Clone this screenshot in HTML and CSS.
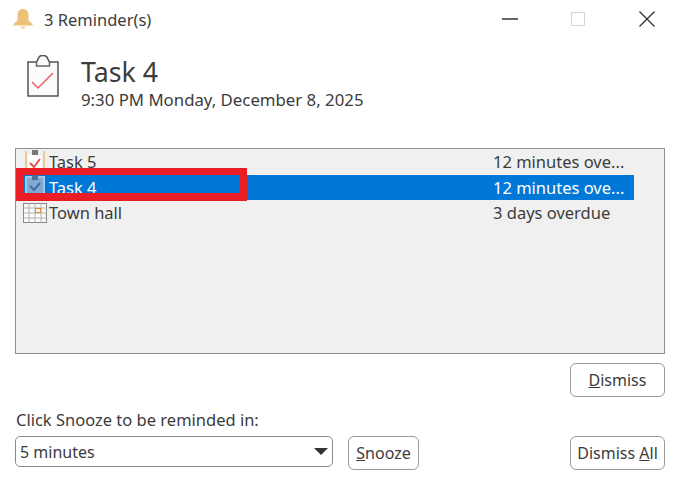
FILE: index.html
```html
<!DOCTYPE html>
<html>
<head>
  <link rel="stylesheet" href="styles.css">
</head>
<body>
  <div class="window">
    <div class="titlebar">
      <svg class="bell" width="20" height="20" viewBox="0 0 20 20">
        <path d="M10 0c-3.500 0-5.500 2.500-5.500 6v5.500L.5 15v1.500h19V15l-4-3.500V6C15.500 2.500 13.500 0 10 0z" fill="#eec07a"/>
        <path d="M7.500 17.500h5c0 1.500-1.200 2.500-2.500 2.500s-2.500-1-2.500-2.500z" fill="#f2d3a3"/>
      </svg>
      <span class="titlebar-text">3 Reminder(s)</span>
      <div class="controls">
        <svg class="control-min" width="16" height="2" viewBox="0 0 16 2"><path d="M0 1h16" stroke="#333" stroke-width="1.500"/></svg>
        <svg class="control-max" width="14" height="14" viewBox="0 0 14 14"><rect x=".5" y=".5" width="13" height="13" fill="none" stroke="#d4d4d4"/></svg>
        <svg class="control-close" width="16" height="16" viewBox="0 0 16 16"><path d="M.5.5l15 15M15.500.5l-15 15" stroke="#333" stroke-width="1.400"/></svg>
      </div>
    </div>

    <div class="header">
      <svg class="header-icon" width="32" height="42" viewBox="0 0 32 42">
        <path d="M1 7h8.500l1.500-2.500c.5-3 2.500-4 5-4s4.500 1 5 4L22.500 7H31v34H1z" fill="#fbfbfb" stroke="#555" stroke-width="1.500"/>
        <path d="M9.500 7v4h13V7" fill="none" stroke="#666" stroke-width="1.500"/>
        <path d="M5 27l6 6L26 18" fill="none" stroke="#e4636b" stroke-width="1.500"/>
      </svg>
      <div>
        <div class="header-title">Task 4</div>
        <div class="header-date">9:30 PM Monday, December 8, 2025</div>
      </div>
    </div>

    <div class="list">
      <div class="row">
        <svg class="row-icon row-icon-clip" width="20" height="24" viewBox="0 0 20 24">
          <path d="M1 1v21M19 1v21" stroke="#efc98d" stroke-width="2"/>
          <rect x="7" y="0" width="6" height="5" fill="#777"/>
          <rect x="3" y="5" width="14" height="17" fill="#fdfdfd"/>
          <path d="M5 13l4 4 6-8" fill="none" stroke="#d9534a" stroke-width="2"/>
        </svg>
        <span class="row-name">Task 5</span>
        <span class="row-due">12 minutes ove...</span>
      </div>
      <div class="row row-selected">
        <svg class="row-icon row-icon-clip" width="20" height="24" viewBox="0 0 20 24">
          <rect x="1" y="2" width="18" height="20" fill="#7fa8d2" stroke="#a5c6e6" stroke-width="2"/>
          <rect x="7" y="0" width="6" height="5" fill="#4d6f94"/>
          <path d="M5 11l4 4 6-7" fill="none" stroke="#3d6ea3" stroke-width="2"/>
        </svg>
        <span class="row-name">Task 4</span>
        <span class="row-due">12 minutes ove...</span>
      </div>
      <div class="row">
        <svg class="row-icon" width="24" height="20" viewBox="0 0 24 20">
          <rect x=".5" y=".5" width="23" height="19" fill="#fafafa" stroke="#888"/>
          <path d="M.5 5h23M.5 10h23M.5 15h23M6 .5v19M12 .5v19M18 .5v19" stroke="#b4b4b4" stroke-width="1"/>
          <rect x="12.500" y="5.500" width="5" height="4" fill="#fff" stroke="#e58a2e"/>
        </svg>
        <span class="row-name">Town hall</span>
        <span class="row-due">3 days overdue</span>
      </div>
      <div class="highlight"></div>
    </div>

    <div class="footer">
      <div class="dismiss-row">
        <button class="btn btn-wide"><u>D</u>ismiss</button>
      </div>
      <div class="snooze-label">Click Snooze to be reminded in:</div>
      <div class="snooze-row">
        <div class="select">
          <span>5 minutes</span>
          <span class="select-arrow"></span>
        </div>
        <button class="btn btn-snooze"><u>S</u>nooze</button>
        <button class="btn btn-wide btn-all">Dismiss <u>A</u>ll</button>
      </div>
    </div>
  </div>
</body>
</html>
```

FILE: styles.css
```css
body {
  margin: 0;
  background-color: #fff;
  font-family: "Noto Sans", "Open Sans", sans-serif;
  color: #3c3c3c;
  font-size: 16.500px;
}

.window {
  width: 682px;
  height: 478px;
  overflow: hidden;
}

.titlebar {
  display: flex;
  align-items: center;
  height: 38px;
  padding-left: 13px;
}

.titlebar-text {
  margin-left: 11px;
}

.controls {
  display: flex;
  align-items: center;
  margin-left: auto;
  margin-right: 27px;
}

.control-max {
  margin-left: 53px;
  margin-top: -1px;
}

.control-close {
  margin-left: 54px;
  margin-top: -1px;
}

.header {
  display: flex;
  align-items: flex-start;
  padding: 17px 0 0 27px;
  height: 110px;
  box-sizing: border-box;
}

.header-icon {
  margin-right: 22px;
}

.header-title {
  font-size: 26.700px;
  line-height: 36px;
  margin-top: -1px;
}

.header-date {
  font-size: 16.800px;
  line-height: 19px;
}

.list {
  position: relative;
  height: 204px;
  width: 648px;
  margin-left: 15px;
  background-color: #f0f0f0;
  border: 1px solid #8f8f8f;
}

.row {
  display: flex;
  align-items: center;
  height: 25.500px;
  width: 617px;
  margin-left: 1px;
  padding-left: 6px;
  box-sizing: border-box;
}

.row-selected {
  background-color: #0078d7;
  color: #fff;
}

.row-icon {
  flex: none;
  width: 24px;
  height: 20px;
  margin-right: 2px;
}

.row-icon-clip {
  width: 20px;
  height: 24px;
  margin-left: 2px;
  margin-right: 4px;
}

.row-name {
  width: 444px;
}

.highlight {
  position: absolute;
  left: 0;
  top: 19px;
  width: 231px;
  height: 33px;
  box-sizing: border-box;
  border: solid #ea1c24;
  border-width: 7px 8px 8px 8px;
}

.footer {
  padding: 9px 17px 0 15px;
}

.dismiss-row {
  display: flex;
  justify-content: flex-end;
}

.snooze-label {
  margin-top: 12px;
  line-height: 22px;
  margin-left: 1px;
}

.snooze-row {
  display: flex;
  align-items: flex-start;
  margin-top: 5px;
}

.select {
  display: flex;
  align-items: center;
  justify-content: space-between;
  width: 318px;
  height: 31px;
  padding: 0 4px;
  box-sizing: border-box;
  border: 1px solid #8a8a8a;
  border-radius: 5px;
  font-size: 16px;
}

.select-arrow {
  width: 0;
  height: 0;
  margin-right: 0;
  border-left: 7px solid transparent;
  border-right: 7px solid transparent;
  border-top: 7px solid #333;
}

.btn {
  height: 34px;
  padding: 0;
  background-color: #fff;
  border: 1px solid #9a9a9a;
  border-radius: 6px;
  font-family: "Noto Sans", "Open Sans", sans-serif;
  font-size: 16px;
  color: #3c3c3c;
}

.btn-wide {
  width: 95px;
}

.btn-snooze {
  width: 71px;
  margin-left: 15px;
}

.btn-all {
  margin-left: auto;
}
```
